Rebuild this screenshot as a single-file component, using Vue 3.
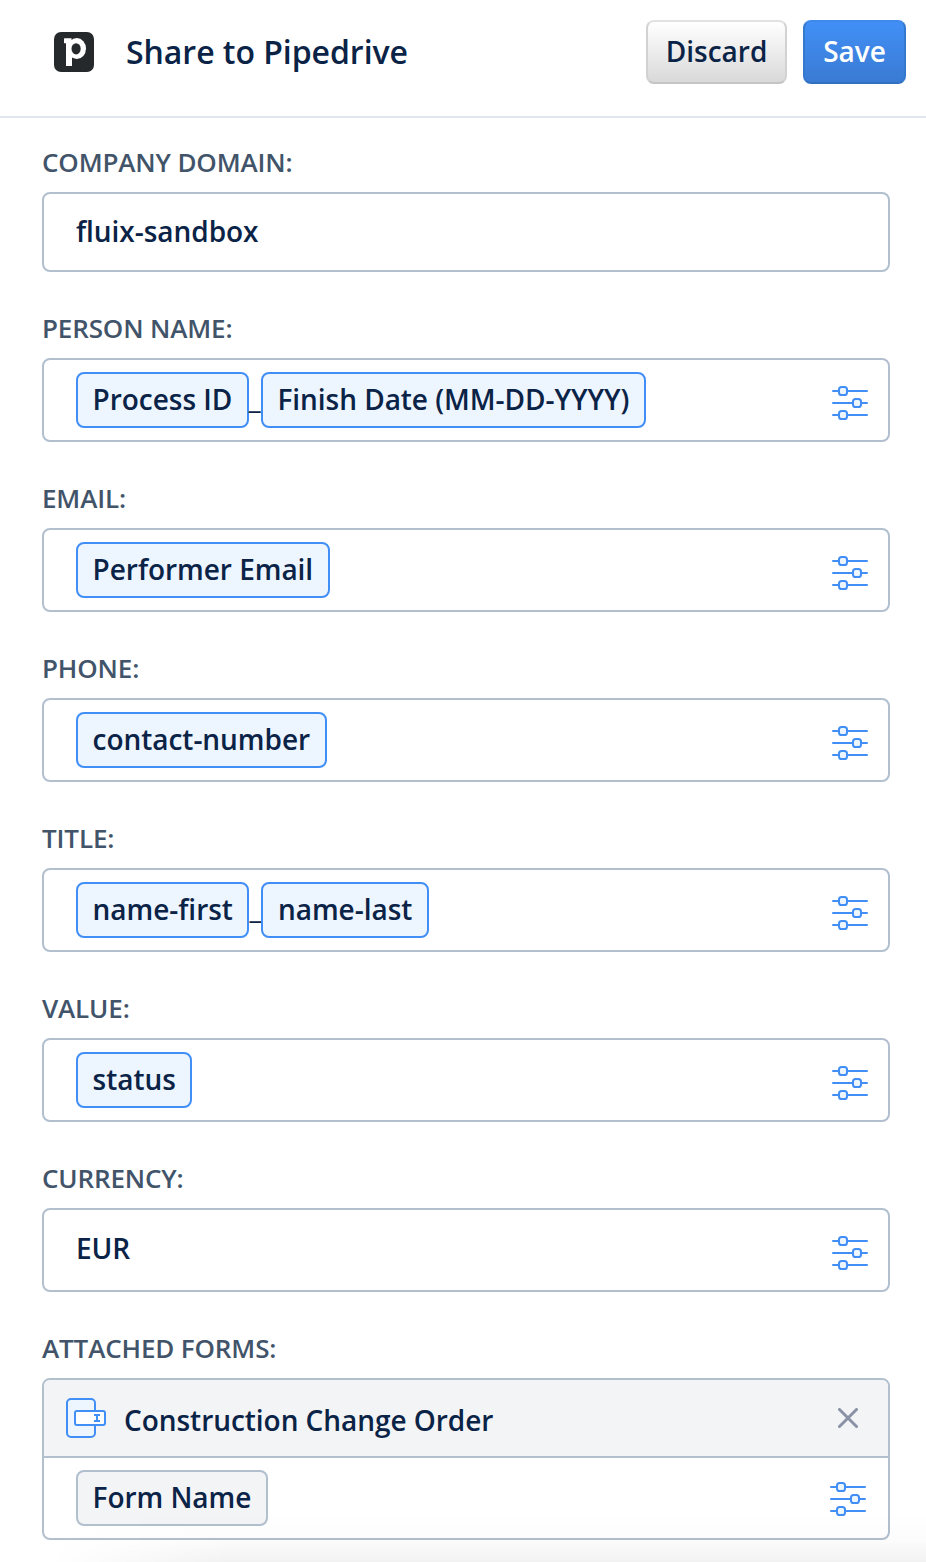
<script setup>
const fields = [
  { label: 'COMPANY DOMAIN:', text: 'fluix-sandbox', plain: true },
  { label: 'PERSON NAME:', chips: ['Process ID', 'Finish Date (MM-DD-YYYY)'] },
  { label: 'EMAIL:', chips: ['Performer Email'] },
  { label: 'PHONE:', chips: ['contact-number'] },
  { label: 'TITLE:', chips: ['name-first', 'name-last'] },
  { label: 'VALUE:', chips: ['status'] },
  { label: 'CURRENCY:', text: 'EUR' },
]
</script>

<template>
  <div class="page">
    <svg width="0" height="0" class="defs">
      <symbol id="sliders" viewBox="0 0 36 34">
        <g fill="#edf5ff" stroke="#418ff6" stroke-width="2" stroke-linecap="round">
          <path d="M1 5H35M1 17H35M1 29H35" />
          <rect x="7" y="1" width="8" height="8" rx="2.6" />
          <rect x="21" y="13" width="8" height="8" rx="2.6" />
          <rect x="7" y="25" width="8" height="8" rx="2.6" />
        </g>
      </symbol>
    </svg>

    <header class="header">
      <svg class="logo" width="40" height="40" viewBox="0 0 40 40">
        <rect width="40" height="40" rx="7" fill="#26292c" />
        <rect x="12" y="8" width="6" height="26" fill="#fff" />
        <rect x="10" y="6.3" width="7.6" height="5" rx="0.5" fill="#fff" />
        <ellipse cx="22.8" cy="16.6" rx="9.2" ry="10.5" fill="#fff" />
        <ellipse cx="22.1" cy="16.8" rx="4.6" ry="5.6" fill="#26292c" />
      </svg>
      <h1>Share to Pipedrive</h1>
      <button class="btn discard">Discard</button>
      <button class="btn save">Save</button>
    </header>

    <main>
      <section v-for="f in fields" :key="f.label" class="field">
        <div class="label">{{ f.label }}</div>
        <div class="box" :class="{ plain: f.plain }">
          <span v-if="f.text" class="value">{{ f.text }}</span>
          <template v-for="(c, i) in f.chips" :key="c">
            <span v-if="i" class="sep">_</span>
            <span class="chip">{{ c }}</span>
          </template>
          <svg v-if="!f.plain" class="sliders" width="36" height="34"><use href="#sliders" /></svg>
        </div>
      </section>

      <section class="field">
        <div class="label">ATTACHED FORMS:</div>
        <div class="card">
          <div class="card-head">
            <svg width="40" height="40" viewBox="0 0 40 40" fill="none" stroke="#418ff6" stroke-width="2">
              <rect x="1" y="1" width="28" height="38" rx="4" fill="#edf5ff" />
              <rect x="9" y="13" width="30" height="14" rx="2" fill="#fff" />
              <path d="M28 17H34M31 17V23M28 23H34" />
            </svg>
            <span class="card-title">Construction Change Order</span>
            <svg class="close" width="20" height="20" viewBox="0 0 20 20">
              <path d="M1.5 1.5L18.5 18.5M18.5 1.5L1.5 18.5" stroke="#8a93a5" stroke-width="3" stroke-linecap="round" />
            </svg>
          </div>
          <div class="card-body">
            <span class="chip gray">Form Name</span>
            <svg class="sliders" width="36" height="34"><use href="#sliders" /></svg>
          </div>
        </div>
      </section>
    </main>
    <div class="fade"></div>
  </div>
</template>

<style>
body {
  margin: 0;
  background: #fff;
}
</style>

<style scoped>
.page {
  position: relative;
  box-sizing: border-box;
  height: 1562px;
  overflow: hidden;
  font-family: "Open Sans", "Noto Sans", sans-serif;
  font-weight: 600;
  font-size: 28px;
  letter-spacing: -0.04px;
  font-variant-ligatures: none;
  color: #0a2346;
}
.defs {
  position: absolute;
}
.header {
  display: flex;
  align-items: center;
  box-sizing: border-box;
  height: 118px;
  padding: 0 20px 14px 54px;
  border-bottom: 2px solid #e1e5ed;
}
.logo {
  margin-right: 32px;
  margin-bottom: -2px;
}
h1 {
  flex: 1;
  margin: 2px 0 0;
  font-size: 32px;
  font-weight: 600;
  line-height: 44px;
}
.btn {
  box-sizing: border-box;
  height: 64px;
  margin: 2px 0 0;
  padding: 0 0 2px;
  border: 2px solid;
  border-radius: 8px;
  font: inherit;
}
.discard {
  width: 141px;
  margin-right: 16px;
  color: #0a2346;
  border-color: #e2e2e2 #d2d2d2 #c5c5c5;
  background: linear-gradient(#fff, #d9d9d9);
}
.save {
  width: 103px;
  color: #fff;
  border-color: #3d89ec #3579cf #3270c2;
  background: linear-gradient(#418ff6, #3a7bd3);
}
main {
  display: flex;
  flex-direction: column;
  gap: 38px;
  padding: 26px 36px 0 42px;
}
.label {
  height: 36px;
  margin-bottom: 12px;
  font-size: 26px;
  letter-spacing: -0.14px;
  line-height: 36px;
  color: #42546a;
}
.box {
  display: flex;
  align-items: center;
  box-sizing: border-box;
  height: 84px;
  padding: 0 20px 0 32px;
  border: 2px solid #b1bfce;
  border-radius: 8px;
}
.box.plain {
  height: 80px;
}
.value {
  line-height: 38px;
  margin-bottom: 5px;
}
.plain .value {
  margin-bottom: 2px;
}
.chip {
  box-sizing: border-box;
  height: 56px;
  padding: 0 14.6px;
  border: 2px solid #418ff6;
  border-radius: 8px;
  background: #edf5ff;
  line-height: 51px;
  white-space: nowrap;
}
.chip.gray {
  border-color: #b1bfce;
  background: #f3f4f6;
}
.sep {
  width: 12px;
  margin-bottom: 4px;
  line-height: 51px;
}
.sliders {
  margin-left: auto;
  margin-top: 6px;
}
.card {
  box-sizing: border-box;
  height: 162px;
  border: 2px solid #b1bfce;
  border-radius: 8px;
  overflow: hidden;
}
.card-head {
  display: flex;
  align-items: center;
  height: 76px;
  padding: 0 30px 0 22px;
  background: #f3f4f6;
  border-bottom: 2px solid #b1bfce;
}
.card-title {
  margin: 3px 0 0 18px;
}
.close {
  margin-left: auto;
}
.card-body {
  display: flex;
  align-items: center;
  height: 80px;
  padding: 0 22px 0 32px;
}
.card-body .sliders {
  margin-top: 2px;
}
.fade {
  position: absolute;
  left: 50px;
  right: 0;
  bottom: 0;
  height: 50px;
  background: linear-gradient(transparent, rgba(0, 0, 0, 0.012) 55%, rgba(0, 0, 0, 0.05));
  -webkit-mask-image: linear-gradient(to right, transparent, #000 180px);
  mask-image: linear-gradient(to right, transparent, #000 180px);
}
</style>
